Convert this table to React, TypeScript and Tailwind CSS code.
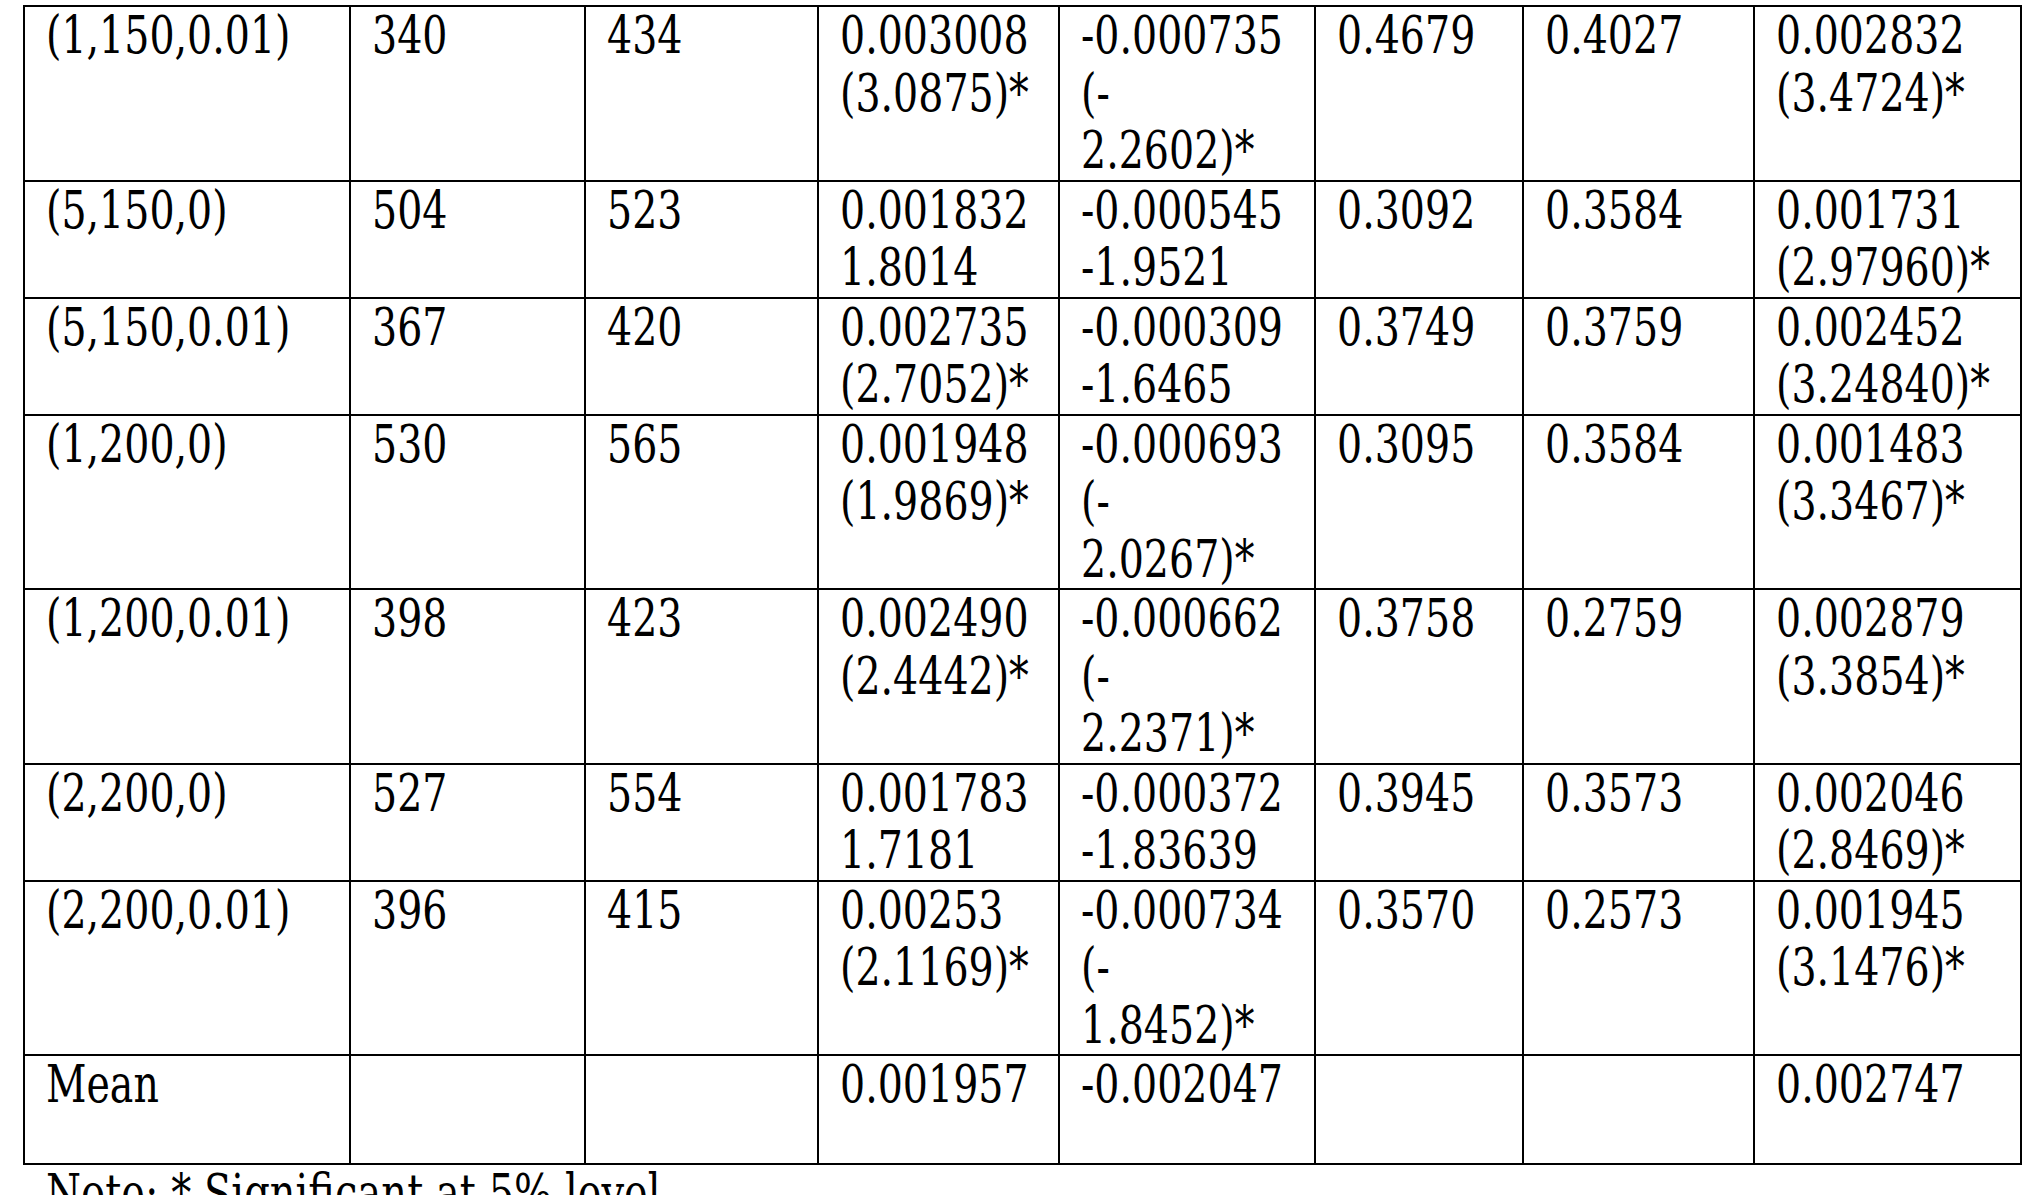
import React from "react";

type Row = { cells: string[][]; mean?: boolean };

const rows: Row[] = [
  {
    cells: [
      ["(1,150,0.01)"],
      ["340"],
      ["434"],
      ["0.003008", "(3.0875)*"],
      ["-0.000735", "(-", "2.2602)*"],
      ["0.4679"],
      ["0.4027"],
      ["0.002832", "(3.4724)*"],
    ],
  },
  {
    cells: [
      ["(5,150,0)"],
      ["504"],
      ["523"],
      ["0.001832", "1.8014"],
      ["-0.000545", "-1.9521"],
      ["0.3092"],
      ["0.3584"],
      ["0.001731", "(2.97960)*"],
    ],
  },
  {
    cells: [
      ["(5,150,0.01)"],
      ["367"],
      ["420"],
      ["0.002735", "(2.7052)*"],
      ["-0.000309", "-1.6465"],
      ["0.3749"],
      ["0.3759"],
      ["0.002452", "(3.24840)*"],
    ],
  },
  {
    cells: [
      ["(1,200,0)"],
      ["530"],
      ["565"],
      ["0.001948", "(1.9869)*"],
      ["-0.000693", "(-", "2.0267)*"],
      ["0.3095"],
      ["0.3584"],
      ["0.001483", "(3.3467)*"],
    ],
  },
  {
    cells: [
      ["(1,200,0.01)"],
      ["398"],
      ["423"],
      ["0.002490", "(2.4442)*"],
      ["-0.000662", "(-", "2.2371)*"],
      ["0.3758"],
      ["0.2759"],
      ["0.002879", "(3.3854)*"],
    ],
  },
  {
    cells: [
      ["(2,200,0)"],
      ["527"],
      ["554"],
      ["0.001783", "1.7181"],
      ["-0.000372", "-1.83639"],
      ["0.3945"],
      ["0.3573"],
      ["0.002046", "(2.8469)*"],
    ],
  },
  {
    cells: [
      ["(2,200,0.01)"],
      ["396"],
      ["415"],
      ["0.00253", "(2.1169)*"],
      ["-0.000734", "(-", "1.8452)*"],
      ["0.3570"],
      ["0.2573"],
      ["0.001945", "(3.1476)*"],
    ],
  },
  {
    mean: true,
    cells: [
      ["Mean"],
      [],
      [],
      ["0.001957"],
      ["-0.002047"],
      [],
      [],
      ["0.002747"],
    ],
  },
];

function Cell({ lines, mean }: { lines: string[]; mean?: boolean }) {
  return (
    <div
      className={
        "min-w-0 border-r-2 border-b-2 border-black pl-[21px] " +
        (mean ? "h-[109px]" : "")
      }
    >
      {lines.map((l, i) => (
        <div key={i} className="w-fit origin-left scale-x-[0.76] whitespace-nowrap">
          {l}
        </div>
      ))}
    </div>
  );
}

export default function App() {
  return (
    <div
      className="min-h-screen bg-white text-black pt-[5px] pl-[23px] text-[52px] leading-[57.5px]"
      style={{ fontFamily: '"DejaVu Serif", serif' }}
    >
      <div className="grid grid-cols-[326px_235px_233px_241px_256px_208px_231px_267px] w-fit border-t-2 border-l-2 border-black">
        {rows.map((r, ri) =>
          r.cells.map((c, ci) => (
            <Cell key={ri + "-" + ci} lines={c} mean={r.mean} />
          ))
        )}
      </div>
      <div className="pl-[23px]">
        <div className="w-fit origin-left scale-x-[0.77] whitespace-nowrap">
          Note: * Significant at 5% level
        </div>
      </div>
    </div>
  );
}
